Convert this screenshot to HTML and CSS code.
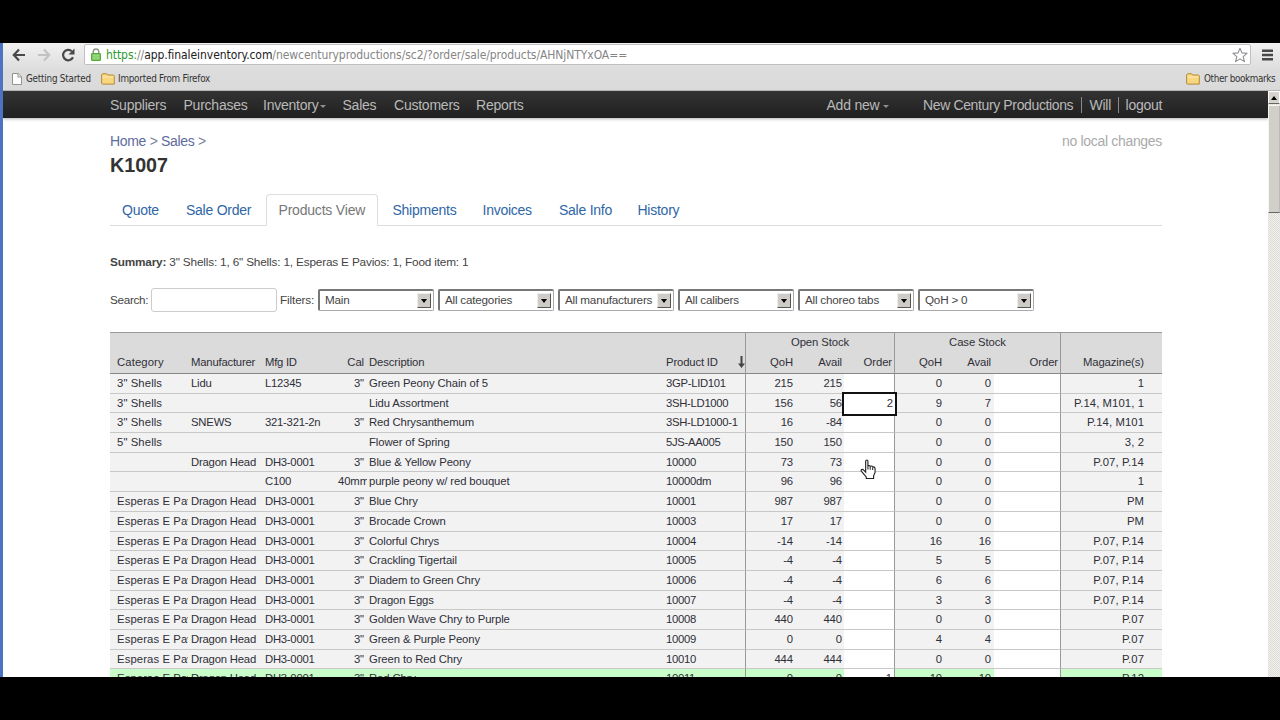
FILE: index.html
```html
<!DOCTYPE html>
<html lang="en">
<head>
<meta charset="utf-8">
<title>K1007 - Products View</title>
<link rel="stylesheet" href="styles.css">
</head>
<body>
<div class="window">
  <header class="chrome">
    <div class="toolbar">
      <svg class="ic-back" width="14" height="14" viewBox="0 0 14 14"><path d="M7 1.5 1.8 7 7 12.500M2 7h11" fill="none" stroke="#484848" stroke-width="2.200"/></svg>
      <svg class="ic-fwd" width="14" height="14" viewBox="0 0 14 14"><path d="M7 1.500 12.200 7 7 12.500M12 7H1" fill="none" stroke="#c2c2c2" stroke-width="2.200"/></svg>
      <svg class="ic-reload" width="14" height="14" viewBox="0 0 14 14"><path d="M12 9.300A5.200 5.200 0 1 1 10.800 3.200" fill="none" stroke="#484848" stroke-width="2.200"/><path d="M13.500 .5v6H7.500z" fill="#484848"/></svg>
      <div class="omnibox">
        <svg class="ic-lock" width="10" height="13" viewBox="0 0 10 13"><path d="M2.300 6V3.600a2.700 2.700 0 0 1 5.400 0V6" fill="none" stroke="#8d9a87" stroke-width="1.500"/><rect x=".5" y="5.500" width="9" height="7" rx=".5" fill="#7fc962" stroke="#55a83d"/><path d="M2 7.800h6M2 10h6" stroke="#a9df93"/></svg>
        <div class="url"><span class="secure">https:</span>//<span class="host">app.finaleinventory.com</span>/newcenturyproductions/sc2/?order/sale/products/AHNjNTYxOA==</div>
        <svg class="ic-star" width="16" height="16" viewBox="0 0 16 16"><path d="M8 1.200 10 5.900 15 6.300 11.200 9.600 12.400 14.600 8 11.900 3.600 14.600 4.800 9.600 1 6.300 6 5.900z" fill="#fff" stroke="#8b8b90" stroke-width="1.100" stroke-linejoin="round"/></svg>
      </div>
      <svg class="ic-menu" width="11" height="12" viewBox="0 0 11 12"><path d="M0 1.700h11M0 6h11M0 10.300h11" stroke="#484848" stroke-width="2.400"/></svg>
    </div>
    <div class="bookmarks">
      <svg class="ic-page" width="10" height="12" viewBox="0 0 10 12"><path d="M.5.500h5.700L9.500 3.800v7.700h-9z" fill="#fdfdfd" stroke="#939393"/><path d="M6 .5V4h3.500" fill="none" stroke="#939393"/></svg>
      <span class="bm-first">Getting Started</span>
      <svg class="ic-folder" width="14" height="12" viewBox="0 0 14 12"><path d="M.6 10.500V2l1-1.300h4L6.700 2h5.800l.8.800v8.300H1.200z" fill="#f7d680" stroke="#b68a35"/><path d="M1.500 4h11" stroke="#fdecb5"/></svg>
      <span class="bm-second">Imported From Firefox</span>
      <svg class="ic-folder" width="14" height="12" viewBox="0 0 14 12"><path d="M.6 10.500V2l1-1.300h4L6.700 2h5.800l.8.800v8.300H1.200z" fill="#f7d680" stroke="#b68a35"/><path d="M1.500 4h11" stroke="#fdecb5"/></svg>
      <span class="bm-other">Other bookmarks</span>
    </div>
  </header>

  <div class="viewport">
    <div class="page">
      <nav class="navbar">
        <a class="n-suppliers">Suppliers</a><a class="n-purchases">Purchases</a><a class="n-inventory">Inventory<i class="caret"></i></a><a class="n-sales">Sales</a><a class="n-customers">Customers</a><a class="n-reports">Reports</a>
        <a class="n-add">Add new<i class="caret"></i></a><a class="n-company">New Century Productions</a><a class="n-user">Will</a><a class="n-logout">logout</a>
      </nav>
      <main class="content">
        <div class="crumb-row"><div class="crumbs"><a>Home</a> &gt; <a>Sales</a> &gt;</div><div class="status">no local changes</div></div>
        <h1>K1007</h1>
        <div class="tabs">
          <a class="t-quote">Quote</a><a class="t-order">Sale Order</a><a class="t-products active">Products View</a><a class="t-ship">Shipments</a><a class="t-inv">Invoices</a><a class="t-info">Sale Info</a><a class="t-hist">History</a>
        </div>
        <p class="summary"><b>Summary:</b> 3" Shells: 1, 6" Shells: 1, Esperas E Pavios: 1, Food item: 1</p>
        <div class="filters">
          <label class="l-search">Search:</label><input class="search" type="text"><label class="l-filters">Filters:</label>
          <div class="select"><span>Main</span><i></i></div>
          <div class="select"><span>All categories</span><i></i></div>
          <div class="select"><span>All manufacturers</span><i></i></div>
          <div class="select"><span>All calibers</span><i></i></div>
          <div class="select"><span>All choreo tabs</span><i></i></div>
          <div class="select"><span>QoH &gt; 0</span><i></i></div>
        </div>

        <div class="grid">
          <div class="head groups"><div class="g-blank"></div><div class="g-open">Open Stock</div><div class="g-case">Case Stock</div><div></div></div>
          <div class="row head labels"><div>Category</div><div>Manufacturer</div><div>Mfg ID</div><div>Cal</div><div>Description</div><div>Product ID<svg class="sort" width="7" height="12" viewBox="0 0 7 12"><path d="M2.500 0h2v7.500H7L3.500 12 0 7.500h2.500z" fill="#444"/></svg></div><div>QoH</div><div>Avail</div><div>Order</div><div>QoH</div><div>Avail</div><div>Order</div><div>Magazine(s)</div></div>
          <div class="row"><div>3" Shells</div><div>Lidu</div><div>L12345</div><div>3"</div><div>Green Peony Chain of 5</div><div>3GP-LID101</div><div>215</div><div>215</div><div></div><div>0</div><div>0</div><div></div><div>1</div></div>
          <div class="row"><div>3" Shells</div><div></div><div></div><div></div><div>Lidu Assortment</div><div>3SH-LD1000</div><div>156</div><div>56</div><div class="editing"><span class="editor">2</span></div><div>9</div><div>7</div><div></div><div>P.14, M101, 1</div></div>
          <div class="row"><div>3" Shells</div><div>SNEWS</div><div>321-321-2n</div><div>3"</div><div>Red Chrysanthemum</div><div>3SH-LD1000-1</div><div>16</div><div>-84</div><div></div><div>0</div><div>0</div><div></div><div>P.14, M101</div></div>
          <div class="row"><div>5" Shells</div><div></div><div></div><div></div><div>Flower of Spring</div><div>5JS-AA005</div><div>150</div><div>150</div><div></div><div>0</div><div>0</div><div></div><div>3, 2</div></div>
          <div class="row"><div></div><div>Dragon Head</div><div>DH3-0001</div><div>3"</div><div>Blue &amp; Yellow Peony</div><div>10000</div><div>73</div><div>73</div><div></div><div>0</div><div>0</div><div></div><div>P.07, P.14</div></div>
          <div class="row"><div></div><div></div><div>C100</div><div>40mm</div><div>purple peony w/ red bouquet</div><div>10000dm</div><div>96</div><div>96</div><div></div><div>0</div><div>0</div><div></div><div>1</div></div>
          <div class="row"><div>Esperas E Pavios</div><div>Dragon Head</div><div>DH3-0001</div><div>3"</div><div>Blue Chry</div><div>10001</div><div>987</div><div>987</div><div></div><div>0</div><div>0</div><div></div><div>PM</div></div>
          <div class="row"><div>Esperas E Pavios</div><div>Dragon Head</div><div>DH3-0001</div><div>3"</div><div>Brocade Crown</div><div>10003</div><div>17</div><div>17</div><div></div><div>0</div><div>0</div><div></div><div>PM</div></div>
          <div class="row"><div>Esperas E Pavios</div><div>Dragon Head</div><div>DH3-0001</div><div>3"</div><div>Colorful Chrys</div><div>10004</div><div>-14</div><div>-14</div><div></div><div>16</div><div>16</div><div></div><div>P.07, P.14</div></div>
          <div class="row"><div>Esperas E Pavios</div><div>Dragon Head</div><div>DH3-0001</div><div>3"</div><div>Crackling Tigertail</div><div>10005</div><div>-4</div><div>-4</div><div></div><div>5</div><div>5</div><div></div><div>P.07, P.14</div></div>
          <div class="row"><div>Esperas E Pavios</div><div>Dragon Head</div><div>DH3-0001</div><div>3"</div><div>Diadem to Green Chry</div><div>10006</div><div>-4</div><div>-4</div><div></div><div>6</div><div>6</div><div></div><div>P.07, P.14</div></div>
          <div class="row"><div>Esperas E Pavios</div><div>Dragon Head</div><div>DH3-0001</div><div>3"</div><div>Dragon Eggs</div><div>10007</div><div>-4</div><div>-4</div><div></div><div>3</div><div>3</div><div></div><div>P.07, P.14</div></div>
          <div class="row"><div>Esperas E Pavios</div><div>Dragon Head</div><div>DH3-0001</div><div>3"</div><div>Golden Wave Chry to Purple</div><div>10008</div><div>440</div><div>440</div><div></div><div>0</div><div>0</div><div></div><div>P.07</div></div>
          <div class="row"><div>Esperas E Pavios</div><div>Dragon Head</div><div>DH3-0001</div><div>3"</div><div>Green &amp; Purple Peony</div><div>10009</div><div>0</div><div>0</div><div></div><div>4</div><div>4</div><div></div><div>P.07</div></div>
          <div class="row"><div>Esperas E Pavios</div><div>Dragon Head</div><div>DH3-0001</div><div>3"</div><div>Green to Red Chry</div><div>10010</div><div>444</div><div>444</div><div></div><div>0</div><div>0</div><div></div><div>P.07</div></div>
          <div class="row ordered"><div>Esperas E Pavios</div><div>Dragon Head</div><div>DH3-0001</div><div>3"</div><div>Red Chry</div><div>10011</div><div>0</div><div>0</div><div>1</div><div>10</div><div>10</div><div></div><div>P.12</div></div>
        </div>
      </main>
    </div>
    <div class="scrollbar"><div class="sb-up"></div><div class="sb-thumb"></div></div>
  </div>
</div>
<svg class="cursor" width="17" height="21" viewBox="0 0 15 20" preserveAspectRatio="none"><path d="M5 12.500V2.200Q5 1 6 1t1 1.200V7q0-.8 1-.8t1 1.300q0-.9 1-.8 1.200.1 1.200 1.500 0-.8.900-.7 1.200.2 1.200 1.800v3.500L12 16v2.500H5.500V17L1.300 11.800Q.5 10.600 1.500 10q.9-.4 2 .8z" fill="#fff" stroke="#222" stroke-width="1"/><path d="M7 6.500V10M9 7.500V10.200M11.200 8.200v2.300" stroke="#222" stroke-width=".9"/></svg>
</body>
</html>
```

FILE: styles.css
```css
* { box-sizing: border-box; }
body { margin: 0; width: 1280px; height: 720px; overflow: hidden; background: #000; padding-top: 43px; font-family: "Liberation Sans", Arial, sans-serif; color: #333; }
svg { display: block; flex: none; }
.window { width: 1280px; height: 634px; overflow: hidden; background: #fff; border-left: 3px solid #4c72c4; display: flex; flex-direction: column; }

/* Browser toolbar */
.chrome { height: 48px; flex: none; background: linear-gradient(#f1f1f1, #dcdcdc 60%, #dadada); border-bottom: 1px solid #b4b4b4; font-family: "DejaVu Sans Condensed", "DejaVu Sans", sans-serif; }
.toolbar { height: 22px; display: flex; align-items: center; padding-left: 9px; padding-top: 1px; }
.ic-fwd { margin-left: 11px; }
.ic-reload { margin-left: 10px; }
.omnibox { margin-left: 9px; width: 1167px; height: 21px; border: 1px solid #c0c0c0; border-radius: 2px; background: #fff; display: flex; align-items: center; padding-left: 6px; }
.url { margin-left: 5px; width: 1126px; font-size: 12px; line-height: 18px; letter-spacing: -.07px; color: #858585; white-space: nowrap; }
.secure { color: #2f9a2f; }
.host { color: #222; }
.ic-menu { margin-left: 11px; }
.bookmarks { height: 26px; display: flex; align-items: center; padding-left: 9px; padding-top: 1px; font-size: 9.800px; letter-spacing: -.22px; color: #333; white-space: nowrap; }
.bm-first { margin-left: 4px; width: 75px; }
.bm-second { margin-left: 3px; width: 1068px; }
.bm-other { margin-left: 4px; letter-spacing: -.35px; }

.viewport { flex: 1; min-height: 0; display: flex; }
.page { width: 1265px; overflow: hidden; }
.scrollbar { width: 12px; background: repeating-conic-gradient(#dedcd6 0 25%, #f1f0ed 0 50%) 0 0 / 2px 2px; }
.sb-up { height: 13px; background: #d6d3ce; border: 1px solid #fff; border-bottom-color: #666; display: flex; align-items: center; justify-content: center; }
.sb-up::before { content: ""; border: 3px solid transparent; border-top: 0; border-bottom: 4px solid #000; }
.sb-thumb { margin-top: 1px; height: 108px; background: #d2cec8; border: 1px solid #f4f4f2; border-bottom-color: #666; border-right-color: #bbb; }

/* Site navigation */
.navbar { height: 27px; padding-left: 107px; display: flex; align-items: center; background: linear-gradient(#333, #202020); box-shadow: 0 1px 3px rgba(0,0,0,.3); font-size: 14px; line-height: 28px; letter-spacing: -.23px; color: #b9b9b9; white-space: nowrap; }
.navbar a { flex: none; }
.caret { display: inline-block; margin-left: 4px; vertical-align: 2px; border: 3px solid transparent; border-top-color: #8e8e8e; border-bottom: 0; }
.n-suppliers { width: 73.500px; }
.n-purchases { width: 79.500px; }
.n-inventory { width: 79.500px; }
.n-inventory .caret { margin-left: 1px; }
.n-sales { width: 51.500px; }
.n-customers { width: 82px; }
.n-reports { width: 350.500px; }
.n-add { width: 96.500px; }
.n-company { width: 157.500px; letter-spacing: -.37px; }
.n-user, .n-logout { border-left: 1px solid #8a8a8a; line-height: 16px; padding-left: 8px; }
.n-user { width: 37px; }
.n-logout { padding-left: 7px; }

.content { padding-left: 107px; width: 1159px; }
.crumb-row { display: flex; justify-content: space-between; margin-top: 14px; height: 18px; line-height: 19px; font-size: 14px; letter-spacing: -.32px; color: #7c8399; }
.crumbs a { color: #5d6c9c; }
.status { color: #aaa; }
h1 { margin: 3px 0 0; font-size: 19.700px; line-height: 25px; height: 25px; color: #333; }
.tabs { margin-top: 16px; height: 32px; border-bottom: 1px solid #ddd; display: flex; font-size: 14px; line-height: 32px; letter-spacing: -.25px; color: #2f66a8; white-space: nowrap; }
.tabs a { flex: none; }
.t-quote { width: 76px; padding-left: 12px; }
.t-order { width: 79.500px; }
.t-products { width: 112px; height: 32px; padding-left: 12px; }
.active { color: #777; border: 1px solid #ddd; border-bottom-color: #fff; border-radius: 4px 4px 0 0; background: #fff; letter-spacing: -.2px; line-height: 31px; }
.t-ship { width: 105px; padding-left: 15px; }
.t-inv { width: 76.500px; }
.t-info { width: 78.500px; }
.summary { margin: 28px 0 0; font-size: 11.800px; letter-spacing: -.18px; line-height: 17px; height: 17px; color: #444; }
.filters { margin-top: 16px; height: 26px; display: flex; align-items: center; font-size: 11.700px; letter-spacing: -.1px; color: #444; }
.filters label { padding-bottom: 2px; }
.l-search { width: 41px; letter-spacing: -.3px; }
.search { width: 126px; height: 24px; margin: 0 3px 0 0; border: 1px solid #ccc; border-radius: 3px; background: #fff; }
.l-filters { width: 38px; }
.select { width: 116px; height: 22px; margin-right: 4px; border: 1px solid #aaa; border-top: 2px solid #777; border-left: 2px solid #777; border-radius: 2px; background: #fff; display: flex; align-items: center; justify-content: space-between; padding: 0 2px 0 5px; white-space: nowrap; }
.select span { letter-spacing: -.22px; padding-bottom: 2px; }
.select i { width: 14px; height: 15px; background: #cfccc8; border: 1px solid #eee; border-right-color: #555; border-bottom-color: #555; display: flex; align-items: center; justify-content: center; }
.select i::before { content: ""; border: 3px solid transparent; border-top: 4px solid #000; border-bottom: 0; }

/* Product grid */
.grid { margin-top: 19px; width: 1052px; border-top: 1px solid #999; font-size: 11.300px; letter-spacing: -.1px; color: #2f2f38; white-space: nowrap; }
.row { display: grid; grid-template-columns: 78px 73px 74px 32px 296px 83px 48px 50px 51px 48px 51px 67px 101px; height: 19.700px; line-height: 19px; }
.row > div { overflow: hidden; background: #f2f2f2; border-bottom: 1px solid #c8c8c8; }
.row > :nth-child(1) { padding-left: 7px; letter-spacing: .1px; }
.row > :nth-child(2) { padding-left: 3px; letter-spacing: -.2px; }
.row > :nth-child(3) { padding-left: 4px; letter-spacing: -.25px; }
.row > :nth-child(4) { padding: 0 3px; text-align: right; }
.row > :nth-child(5) { padding-left: 2px; }
.row > :nth-child(6) { padding-left: 3px; letter-spacing: -.3px; border-right: 1px solid #999; }
.row > :nth-child(n+7) { text-align: right; }
.row > :nth-child(7), .row > :nth-child(10) { padding-right: 1px; }
.row > :nth-child(8) { padding-right: 2px; }
.row > :nth-child(9), .row > :nth-child(12) { padding-right: 2px; border-right: 1px solid #999; background: #fff; }
.row > :nth-child(11) { padding-right: 3px; }
.row > :nth-child(13) { padding-right: 18px; letter-spacing: .08px; }
.groups { display: grid; grid-template-columns: 636px 149px 166px 101px; height: 20px; line-height: 19px; background: #dbdbdb; text-align: center; }
.g-blank, .g-open, .g-case { border-right: 1px solid #999; }
.row.labels { height: 21px; line-height: 19px; }
.row.labels > div { background: #dbdbdb; border-bottom: 1px solid #888; }
.row.labels > :nth-child(6) { display: flex; justify-content: space-between; letter-spacing: -.15px; }
.row.labels > :nth-child(13) { letter-spacing: -.1px; }
.sort { margin-top: 3px; }
.row.ordered > div { background: #c8fcc8; }
.row.ordered > :nth-child(9), .row.ordered > :nth-child(12) { background: #fff; }
.row > .editing { position: relative; overflow: visible; }
.editor { position: absolute; left: -2px; top: -2px; width: 55px; height: 24px; border: 2px solid #111; background: #fff; padding-right: 2px; line-height: 19px; }
.cursor { position: absolute; left: 860px; top: 459px; }
```
